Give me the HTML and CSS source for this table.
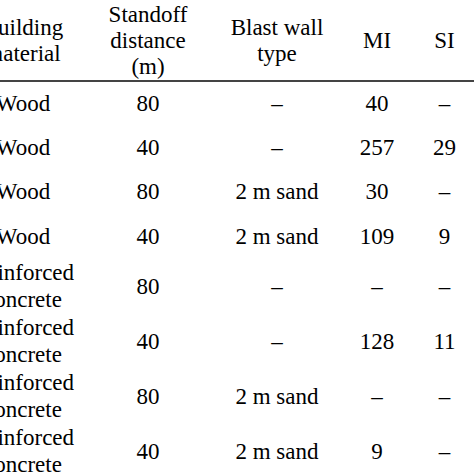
FILE: index.html
```html
<!DOCTYPE html>
<html>
<head>
<meta charset="utf-8">
<link rel="stylesheet" href="styles.css">
</head>
<body>
<div class="frame">
<table class="data">
  <thead>
    <tr>
      <th class="c1">Building<br>material</th>
      <th class="c2">Standoff<br>distance<br>(m)</th>
      <th class="c3">Blast wall<br>type</th>
      <th class="c4">MI</th>
      <th class="c5">SI</th>
    </tr>
  </thead>
  <tbody>
    <tr class="short"><td>Wood</td><td>80</td><td>–</td><td>40</td><td>–</td></tr>
    <tr class="short"><td>Wood</td><td>40</td><td>–</td><td>257</td><td>29</td></tr>
    <tr class="short"><td>Wood</td><td>80</td><td>2 m sand</td><td>30</td><td>–</td></tr>
    <tr class="short"><td>Wood</td><td>40</td><td>2 m sand</td><td>109</td><td>9</td></tr>
    <tr class="tall"><td>Reinforced<br>concrete</td><td>80</td><td>–</td><td>–</td><td>–</td></tr>
    <tr class="tall"><td>Reinforced<br>concrete</td><td>40</td><td>–</td><td>128</td><td>11</td></tr>
    <tr class="tall"><td>Reinforced<br>concrete</td><td>80</td><td>2 m sand</td><td>–</td><td>–</td></tr>
    <tr class="tall"><td>Reinforced<br>concrete</td><td>40</td><td>2 m sand</td><td>9</td><td>–</td></tr>
  </tbody>
</table>
</div>
</body>
</html>
```

FILE: styles.css
```css
html, body {
  margin: 0;
  padding: 0;
  background: #ffffff;
}
.frame {
  width: 474px;
  height: 474px;
  overflow: hidden;
}
.data {
  margin-left: -35px;
  border-collapse: collapse;
  font-family: "Liberation Serif", serif;
  font-size: 23px;
  line-height: 26.5px;
  color: #000000;
}
.data th, .data td {
  padding: 0;
  text-align: center;
  vertical-align: middle;
  font-weight: normal;
  white-space: nowrap;
}
.data th {
  padding-top: 2px;
  line-height: 26px;
}
.data thead tr {
  height: 80px;
  border-bottom: 2px solid #444444;
}
.data .c1 { width: 116px; }
.data .c2 { width: 134px; }
.data .c3 { width: 124px; }
.data .c4 { width: 76px; }
.data .c5 { width: 59px; }
.data tr.short { height: 44.6px; }
.data tr.tall { height: 55px; }
```
